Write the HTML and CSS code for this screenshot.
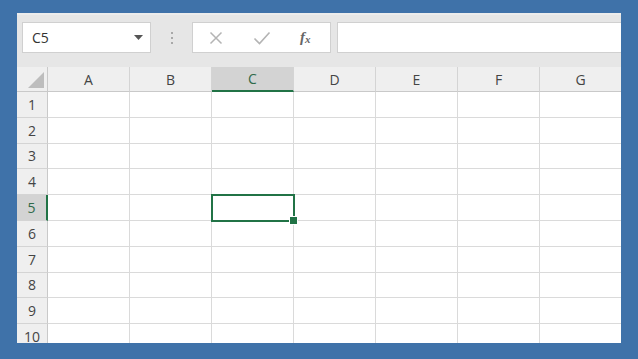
FILE: index.html
```html
<!DOCTYPE html>
<html lang="en">
<head>
    <meta charset="UTF-8">
    <meta name="viewport" content="width=device-width, initial-scale=1.0">
    <title>Spreadsheet</title>
    <link rel="stylesheet" href="styles.css">
</head>
<body>
    <div class="window">
        <div class="toolbar">
            <div class="name-box">
                <span class="name-value">C5</span>
                <svg class="caret" width="9" height="5" viewBox="0 0 9 5"><path d="M0 0h9L4.5 5z" fill="#555"/></svg>
            </div>
            <div class="grip">
                <span></span><span></span><span></span>
            </div>
            <div class="formula-buttons">
                <svg class="btn-icon" width="14" height="14" viewBox="0 0 14 14"><path d="M1.5 1.5l11 11M12.5 1.5l-11 11" stroke="#b4b4b4" stroke-width="1.5" fill="none"/></svg>
                <svg class="btn-icon" width="18" height="14" viewBox="0 0 18 14"><path d="M1.5 7.5l5 5L16.5 1.5" stroke="#b4b4b4" stroke-width="1.6" fill="none"/></svg>
                <span class="fx">f<sub>x</sub></span>
            </div>
            <div class="formula-input"></div>
        </div>
        <div class="sheet">
            <div class="corner"><span class="corner-tri"></span></div>
            <div class="col-head">A</div>
            <div class="col-head">B</div>
            <div class="col-head selected">C</div>
            <div class="col-head">D</div>
            <div class="col-head">E</div>
            <div class="col-head">F</div>
            <div class="col-head">G</div>
        </div>
        <div class="sheet" id="rows"></div>
    </div>

    <script>
        const rows = document.getElementById('rows');
        const cols = ['A', 'B', 'C', 'D', 'E', 'F', 'G'];
        for (let r = 1; r <= 10; r++) {
            const head = document.createElement('div');
            head.className = 'row-head' + (r === 5 ? ' selected' : '');
            head.textContent = r;
            rows.appendChild(head);
            cols.forEach(c => {
                const cell = document.createElement('div');
                cell.className = 'cell' + (r === 5 && c === 'C' ? ' active' : '');
                rows.appendChild(cell);
            });
        }
    </script>
</body>
</html>
```

FILE: styles.css
```css
* {
    margin: 0;
    padding: 0;
    box-sizing: border-box;
    font-family: 'Open Sans', 'Noto Sans', 'DejaVu Sans', sans-serif;
}
body {
    background-color: #3f72a9;
    width: 638px;
    height: 359px;
    overflow: hidden;
    padding: 13px 0 0 17px;
}
.window {
    width: 604px;
    height: 330px;
    background-color: #ffffff;
    overflow: hidden;
}
.toolbar {
    height: 54px;
    background-color: #e6e6e6;
    display: flex;
    align-items: flex-start;
    padding: 9px 0 0 5px;
    border-top: 2px solid #ececec;
}
.name-box {
    width: 129px;
    height: 31px;
    margin-top: -2px;
    background-color: #fff;
    border: 1px solid #d0d0d0;
    display: flex;
    align-items: center;
    justify-content: space-between;
    padding: 0 7px 0 9px;
}
.name-value {
    font-size: 14px;
    color: #333;
}
.grip {
    width: 41px;
    height: 31px;
    margin-top: -2px;
    display: flex;
    flex-direction: column;
    align-items: center;
    justify-content: center;
    gap: 3px;
}
.grip span {
    width: 2px;
    height: 2px;
    background-color: #a8a8a8;
}
.formula-buttons {
    width: 139px;
    height: 31px;
    margin-top: -2px;
    background-color: #fff;
    border: 1px solid #d0d0d0;
    display: flex;
    align-items: center;
    padding: 0 0 0 16px;
}
.btn-icon {
    margin-right: 30px;
}
.btn-icon + .btn-icon {
    margin-right: 29px;
}
.fx {
    font-family: 'Liberation Serif', 'DejaVu Serif', serif;
    font-style: italic;
    font-weight: bold;
    font-size: 15px;
    color: #666;
}
.fx sub {
    font-family: inherit;
    font-size: 11px;
    vertical-align: -1px;
}
.formula-input {
    flex: 1;
    height: 31px;
    margin-top: -2px;
    margin-left: 6px;
    background-color: #fff;
    border: 1px solid #d0d0d0;
    border-right: none;
}
.sheet {
    display: grid;
    grid-template-columns: 31px repeat(7, 82px);
}
#rows {
    grid-template-rows: repeat(10, 25.8px);
}
.corner, .col-head {
    height: 25px;
    background-color: #efefef;
    border-bottom: 1px solid #c9c9c9;
}
.corner {
    border-right: 1px solid #c9c9c9;
    position: relative;
}
.corner-tri {
    position: absolute;
    right: 3px;
    bottom: 3px;
    width: 0;
    height: 0;
    border-style: solid;
    border-width: 0 0 16px 16px;
    border-color: transparent transparent #bdbdbd transparent;
}
.col-head {
    border-right: 1px solid #d4d4d4;
    display: flex;
    align-items: center;
    justify-content: center;
    font-size: 14px;
    color: #444;
}
.col-head.selected {
    background-color: #d3d3d3;
    border-bottom: 2px solid #217346;
    color: #2f6a4a;
}
.row-head {
    background-color: #efefef;
    border-right: 1px solid #c9c9c9;
    border-bottom: 1px solid #d4d4d4;
    display: flex;
    align-items: center;
    justify-content: center;
    font-size: 14px;
    color: #444;
}
.row-head.selected {
    background-color: #d3d3d3;
    border-right: 2px solid #217346;
    color: #2f6a4a;
}
.cell {
    border-right: 1px solid #dadada;
    border-bottom: 1px solid #dadada;
}
.cell.active {
    position: relative;
}
.cell.active::after {
    content: '';
    position: absolute;
    left: -1px;
    top: -1px;
    right: -2px;
    bottom: -2px;
    border: 2px solid #217346;
}
.cell.active::before {
    content: '';
    position: absolute;
    right: -5px;
    bottom: -5px;
    width: 7px;
    height: 7px;
    background-color: #217346;
    border: 1px solid #fff;
    z-index: 1;
}
```
